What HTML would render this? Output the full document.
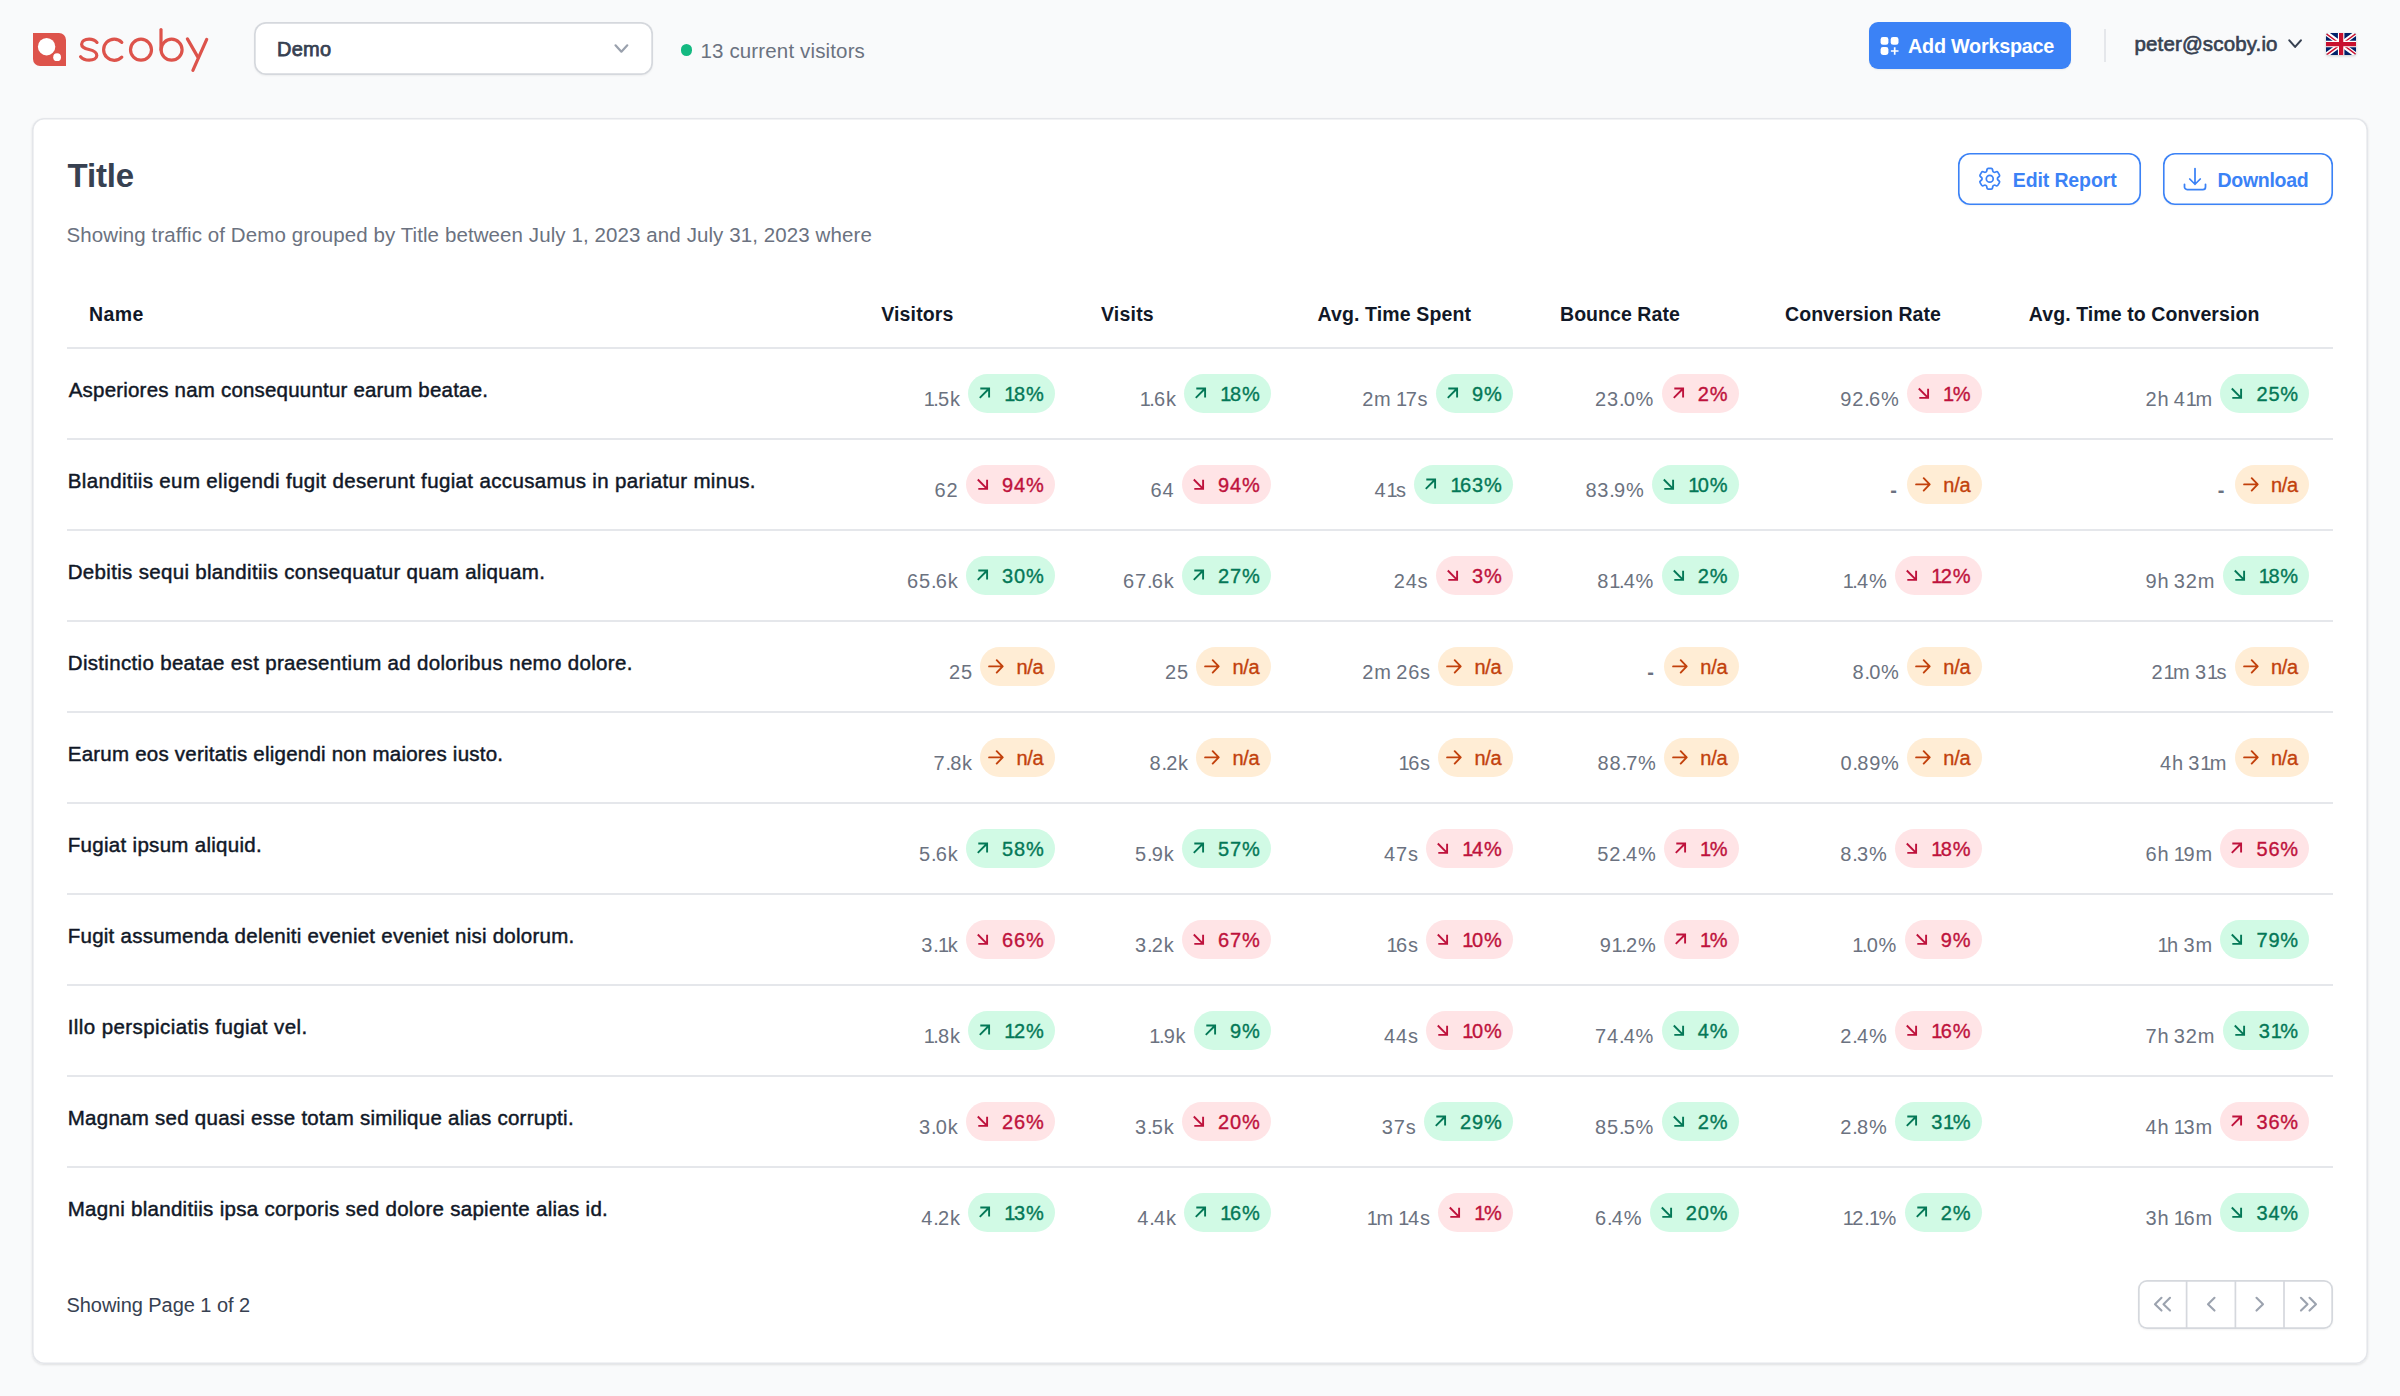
<!DOCTYPE html>
<html><head><meta charset="utf-8"><title>scoby report</title><style>
html,body{margin:0;padding:0}
body{width:2400px;height:1396px;overflow:hidden;background:#f9fafb;position:relative;font-family:"Liberation Sans",sans-serif;}
.abs{position:absolute}
.t{position:absolute;white-space:nowrap}
.cell{display:flex;align-items:flex-start;white-space:nowrap}
.val{font-size:20px;line-height:20px;color:#6b7280;margin-top:15.2px;margin-right:8.4px}
.badge{display:flex;align-items:flex-start;height:39px;border-radius:20px;padding:0 11.3px 0 0;box-sizing:border-box}
.badge svg{flex:none}
.pct{font-size:20px;line-height:20px;margin-top:10.3px;-webkit-text-stroke:0.35px currentColor}
</style></head><body>
<svg class="abs" style="left:0;top:0" width="240" height="90" viewBox="0 0 240 90">
<path d="M33 33H59A7 7 0 0 1 66 40V66H40A7 7 0 0 1 33 59Z" fill="#dd534b"/>
<circle cx="46.6" cy="46.7" r="8.7" fill="#fff"/>
<circle cx="57.1" cy="57.2" r="3.9" fill="#fff"/>
<g fill="none" stroke="#dd534b" stroke-width="3.2" stroke-linecap="round" stroke-linejoin="round">
<path d="M97 42.4C95 40 92.3 39.1 89.2 39.1C84.6 39.1 81.6 41.3 81.6 44.2C81.6 47.3 84.6 48.5 89 49.5C94 50.6 96.8 52.3 96.8 55.6C96.8 58.5 93.6 60.2 89.2 60.2C85.3 60.2 82.4 59 80.6 56.8"/>
<path d="M121.8 42.3A10.6 10.6 0 1 0 121.8 57.1"/>
<circle cx="141" cy="49.7" r="10.5"/>
<path d="M161 29.5V49.7"/>
<circle cx="171.6" cy="49.7" r="10.5"/>
<path d="M187.4 38.9L197.6 56.6"/>
<path d="M206.7 39.4L192.9 70.3"/>
</g></svg>
<div class="abs" style="left:254px;top:22px;width:399px;height:53px;border-radius:12px;background:#fff;box-shadow:inset 0 0 0 1.7px #d5d8dd,0 1px 2px rgba(0,0,0,0.05)"></div>
<div class="t" style="left:277.00px;top:39.37px;font-size:20.00px;line-height:20.00px;color:#374151;font-weight:400;letter-spacing:0.267px;-webkit-text-stroke:0.75px #374151;">Demo</div>
<svg class="abs" style="left:610px;top:40px" width="24" height="18" viewBox="0 0 24 18"><path d="M5.5 5.3L11.4 11.7L17.3 5.3" fill="none" stroke="#9aa1ad" stroke-width="2.2" stroke-linecap="round" stroke-linejoin="round"/></svg>
<div class="abs" style="left:681px;top:44.3px;width:11.4px;height:11.4px;border-radius:50%;background:#14b981"></div>
<div class="t" style="left:700.50px;top:40.95px;font-size:20.50px;line-height:20.50px;color:#6b7280;font-weight:400;letter-spacing:0.144px;">13 current visitors</div>
<div class="abs" style="left:1869px;top:22px;width:202px;height:47px;border-radius:9px;background:#3b82f6;box-shadow:0 1px 2px rgba(0,0,0,0.06)"></div>
<svg class="abs" style="left:1878px;top:35px" width="24" height="24" viewBox="0 0 24 24">
<rect x="2.6" y="2" width="7.8" height="7.8" rx="2.4" fill="#fff"/>
<rect x="12.7" y="2" width="7.8" height="7.8" rx="2.4" fill="#fff"/>
<rect x="2.6" y="12.1" width="7.8" height="7.8" rx="2.4" fill="#fff"/>
<path d="M16.7 12.3V19.8M12.9 16H20.5" stroke="#fff" stroke-width="1.7"/>
</svg>
<div class="t" style="left:1908.00px;top:37.24px;font-size:19.80px;line-height:19.80px;color:#ffffff;font-weight:700;letter-spacing:-0.233px;">Add Workspace</div>
<div class="abs" style="left:2104px;top:29px;width:2px;height:33px;background:#e5e7eb"></div>
<div class="t" style="left:2134.50px;top:34.35px;font-size:20.50px;line-height:20.50px;color:#374151;font-weight:400;letter-spacing:0.138px;-webkit-text-stroke:0.65px #374151;">peter@scoby.io</div>
<svg class="abs" style="left:2284px;top:34px" width="22" height="18" viewBox="0 0 22 18"><path d="M5.3 6.4L11.1 12.9L16.9 6.4" fill="none" stroke="#374151" stroke-width="2.1" stroke-linecap="round" stroke-linejoin="round"/></svg>
<div class="abs" style="left:2325.5px;top:32.6px;width:30.3px;height:22.2px;border-radius:2.5px;overflow:hidden;box-shadow:0 1px 3px rgba(0,0,0,0.18)"><svg width="30.3" height="22.2" viewBox="0 0 30 22" preserveAspectRatio="none" style="display:block">
<rect width="30" height="22" fill="#012169"/>
<path d="M0 0L30 22M30 0L0 22" stroke="#fff" stroke-width="4.6"/>
<path d="M0 0.6L14 10.9M30 0.4L16.4 10.4M0 22L13.6 12M30 21.4L16 11.1" stroke="#C8102E" stroke-width="1.5"/>
<path d="M15 0V22M0 11H30" stroke="#fff" stroke-width="6.4"/>
<path d="M15 0V22M0 11H30" stroke="#C8102E" stroke-width="4.2"/>
</svg></div>
<div class="abs" style="left:32px;top:118px;width:2336px;height:1246px;border-radius:12px;background:#fff;box-shadow:inset 0 0 0 1.6px #e4e6ea,0 1px 3px rgba(0,0,0,0.07),0 1px 2px rgba(0,0,0,0.04)"></div>
<div class="t" style="left:67.50px;top:159.47px;font-size:33.00px;line-height:33.00px;color:#374151;font-weight:700;letter-spacing:-0.150px;">Title</div>
<div class="t" style="left:66.50px;top:225.15px;font-size:20.50px;line-height:20.50px;color:#6b7280;font-weight:400;letter-spacing:0.095px;">Showing traffic of Demo grouped by Title between July 1, 2023 and July 31, 2023 where</div>
<div class="abs" style="left:1958px;top:153px;width:183px;height:52px;border-radius:12px;background:#fff;box-shadow:inset 0 0 0 1.6px #3b82f6,0 1px 2px rgba(0,0,0,0.05)"></div>
<svg class="abs" style="left:1976px;top:164.9px" width="27.5" height="27.5" viewBox="0 0 24 24" fill="none" stroke="#3b82f6" stroke-width="1.5" stroke-linecap="round" stroke-linejoin="round">
<path d="M9.594 3.94c.09-.542.56-.94 1.11-.94h2.593c.55 0 1.02.398 1.11.94l.213 1.281c.063.374.313.686.645.87.074.04.147.083.22.127.325.196.72.257 1.075.124l1.217-.456a1.125 1.125 0 011.37.49l1.296 2.247a1.125 1.125 0 01-.26 1.431l-1.003.827c-.293.241-.438.613-.43.992a7.723 7.723 0 010 .255c-.008.378.137.75.43.991l1.004.827c.424.35.534.955.26 1.43l-1.298 2.247a1.125 1.125 0 01-1.369.491l-1.217-.456c-.355-.133-.75-.072-1.076.124a6.470 6.470 0 01-.22.128c-.331.183-.581.495-.644.869l-.213 1.281c-.09.543-.56.940-1.110.940h-2.594c-.550 0-1.019-.398-1.110-.940l-.213-1.281c-.062-.374-.312-.686-.644-.870a6.520 6.520 0 01-.220-.127c-.325-.196-.720-.257-1.076-.124l-1.217.456a1.125 1.125 0 01-1.369-.490l-1.297-2.247a1.125 1.125 0 01.260-1.431l1.004-.827c.292-.240.437-.613.430-.991a6.932 6.932 0 010-.255c.007-.380-.138-.751-.430-.992l-1.004-.827a1.125 1.125 0 01-.260-1.430l1.297-2.247a1.125 1.125 0 011.370-.491l1.216.456c.356.133.751.072 1.076-.124.072-.044.146-.086.220-.128.332-.183.582-.495.644-.869l.214-1.280z"/>
<path d="M15 12a3 3 0 11-6 0 3 3 0 016 0z"/>
</svg>
<div class="t" style="left:2012.75px;top:171.19px;font-size:19.50px;line-height:19.50px;color:#3b82f6;font-weight:700;letter-spacing:-0.120px;">Edit Report</div>
<div class="abs" style="left:2163px;top:153px;width:170px;height:52px;border-radius:12px;background:#fff;box-shadow:inset 0 0 0 1.6px #3b82f6,0 1px 2px rgba(0,0,0,0.05)"></div>
<svg class="abs" style="left:2181.1px;top:165.1px" width="28" height="28" viewBox="0 0 24 24" fill="none" stroke="#3b82f6" stroke-width="1.5" stroke-linecap="round" stroke-linejoin="round">
<path d="M3 16.5v2.25A2.25 2.25 0 005.25 21h13.5A2.25 2.25 0 0021 18.75V16.5M16.5 12L12 16.5m0 0L7.5 12m4.5 4.5V3"/>
</svg>
<div class="t" style="left:2217.50px;top:171.19px;font-size:19.50px;line-height:19.50px;color:#3b82f6;font-weight:700;letter-spacing:-0.286px;">Download</div>
<div class="t" style="left:89.00px;top:304.89px;font-size:19.50px;line-height:19.50px;color:#111827;font-weight:700;letter-spacing:0.400px;">Name</div>
<div class="t" style="left:881.25px;top:304.89px;font-size:19.50px;line-height:19.50px;color:#111827;font-weight:700;letter-spacing:0.143px;">Visitors</div>
<div class="t" style="left:1101.00px;top:304.89px;font-size:19.50px;line-height:19.50px;color:#111827;font-weight:700;letter-spacing:0.200px;">Visits</div>
<div class="t" style="left:1317.50px;top:304.89px;font-size:19.50px;line-height:19.50px;color:#111827;font-weight:700;letter-spacing:0.129px;">Avg. Time Spent</div>
<div class="t" style="left:1560.00px;top:304.89px;font-size:19.50px;line-height:19.50px;color:#111827;font-weight:700;letter-spacing:0.060px;">Bounce Rate</div>
<div class="t" style="left:1785.00px;top:304.89px;font-size:19.50px;line-height:19.50px;color:#111827;font-weight:700;letter-spacing:0.071px;">Conversion Rate</div>
<div class="t" style="left:2028.75px;top:304.89px;font-size:19.50px;line-height:19.50px;color:#111827;font-weight:700;letter-spacing:0.091px;">Avg. Time to Conversion</div>
<div class="abs" style="left:67px;top:347.3px;width:2266px;height:2px;background:#e5e7eb"></div>
<div class="abs" style="left:67px;top:438.3px;width:2266px;height:2px;background:#e5e7eb"></div>
<div class="abs" style="left:67px;top:529.3px;width:2266px;height:2px;background:#e5e7eb"></div>
<div class="abs" style="left:67px;top:620.3px;width:2266px;height:2px;background:#e5e7eb"></div>
<div class="abs" style="left:67px;top:711.3px;width:2266px;height:2px;background:#e5e7eb"></div>
<div class="abs" style="left:67px;top:802.3px;width:2266px;height:2px;background:#e5e7eb"></div>
<div class="abs" style="left:67px;top:893.3px;width:2266px;height:2px;background:#e5e7eb"></div>
<div class="abs" style="left:67px;top:984.3px;width:2266px;height:2px;background:#e5e7eb"></div>
<div class="abs" style="left:67px;top:1075.3px;width:2266px;height:2px;background:#e5e7eb"></div>
<div class="abs" style="left:67px;top:1166.3px;width:2266px;height:2px;background:#e5e7eb"></div>
<div class="t" style="left:68.75px;top:379.75px;font-size:20.50px;line-height:20.50px;color:#111827;font-weight:400;letter-spacing:0.195px;-webkit-text-stroke:0.45px #111827;">Asperiores nam consequuntur earum beatae.</div>
<div class="abs cell" style="right:1345.0px;top:373.6px;"><span class="val"><span style="letter-spacing:-1.5px">1</span><span style="letter-spacing:-0.8px">.</span><span style="letter-spacing:0.8px">5</span>k</span><span class="badge" style="background:#d1fae5;color:#047857"><svg width="36" height="39" viewBox="0 0 36 39" fill="none" stroke="#047857" stroke-width="1.9"><path d="M11.8 23.9L21.1 14.5M12.3 14.5H21.1V23.6" stroke-linejoin="miter"/></svg><span class="pct"><span style="letter-spacing:-1.5px">1</span><span style="letter-spacing:0.8px">8</span>%</span></span></div>
<div class="abs cell" style="right:1129.0px;top:373.6px;"><span class="val"><span style="letter-spacing:-1.5px">1</span><span style="letter-spacing:-0.8px">.</span><span style="letter-spacing:0.8px">6</span>k</span><span class="badge" style="background:#d1fae5;color:#047857"><svg width="36" height="39" viewBox="0 0 36 39" fill="none" stroke="#047857" stroke-width="1.9"><path d="M11.8 23.9L21.1 14.5M12.3 14.5H21.1V23.6" stroke-linejoin="miter"/></svg><span class="pct"><span style="letter-spacing:-1.5px">1</span><span style="letter-spacing:0.8px">8</span>%</span></span></div>
<div class="abs cell" style="right:887.0px;top:373.6px;"><span class="val"><span style="letter-spacing:0.8px">2</span>m<span style="letter-spacing:-0.3px"> </span><span style="letter-spacing:-1.5px">1</span><span style="letter-spacing:0.8px">7</span>s</span><span class="badge" style="background:#d1fae5;color:#047857"><svg width="36" height="39" viewBox="0 0 36 39" fill="none" stroke="#047857" stroke-width="1.9"><path d="M11.8 23.9L21.1 14.5M12.3 14.5H21.1V23.6" stroke-linejoin="miter"/></svg><span class="pct"><span style="letter-spacing:0.8px">9</span>%</span></span></div>
<div class="abs cell" style="right:661.2px;top:373.6px;"><span class="val"><span style="letter-spacing:0.8px">2</span><span style="letter-spacing:0.8px">3</span><span style="letter-spacing:-0.8px">.</span><span style="letter-spacing:0.8px">0</span>%</span><span class="badge" style="background:#ffe4e6;color:#be123c"><svg width="36" height="39" viewBox="0 0 36 39" fill="none" stroke="#be123c" stroke-width="1.9"><path d="M11.8 23.9L21.1 14.5M12.3 14.5H21.1V23.6" stroke-linejoin="miter"/></svg><span class="pct"><span style="letter-spacing:0.8px">2</span>%</span></span></div>
<div class="abs cell" style="right:418.2px;top:373.6px;"><span class="val"><span style="letter-spacing:0.8px">9</span><span style="letter-spacing:0.8px">2</span><span style="letter-spacing:-0.8px">.</span><span style="letter-spacing:0.8px">6</span>%</span><span class="badge" style="background:#ffe4e6;color:#be123c"><svg width="36" height="39" viewBox="0 0 36 39" fill="none" stroke="#be123c" stroke-width="1.9"><path d="M11.8 14.5L21.1 23.9M21.1 14.8V23.9H12.3" stroke-linejoin="miter"/></svg><span class="pct"><span style="letter-spacing:-1.5px">1</span>%</span></span></div>
<div class="abs cell" style="right:90.6px;top:373.6px;"><span class="val"><span style="letter-spacing:0.8px">2</span>h<span style="letter-spacing:-0.3px"> </span><span style="letter-spacing:0.8px">4</span><span style="letter-spacing:-1.5px">1</span>m</span><span class="badge" style="background:#d1fae5;color:#047857"><svg width="36" height="39" viewBox="0 0 36 39" fill="none" stroke="#047857" stroke-width="1.9"><path d="M11.8 14.5L21.1 23.9M21.1 14.8V23.9H12.3" stroke-linejoin="miter"/></svg><span class="pct"><span style="letter-spacing:0.8px">2</span><span style="letter-spacing:0.8px">5</span>%</span></span></div>
<div class="t" style="left:67.75px;top:470.75px;font-size:20.50px;line-height:20.50px;color:#111827;font-weight:400;letter-spacing:0.353px;-webkit-text-stroke:0.45px #111827;">Blanditiis eum eligendi fugit deserunt fugiat accusamus in pariatur minus.</div>
<div class="abs cell" style="right:1345.0px;top:464.6px;"><span class="val"><span style="letter-spacing:0.8px">6</span>2</span><span class="badge" style="background:#ffe4e6;color:#be123c"><svg width="36" height="39" viewBox="0 0 36 39" fill="none" stroke="#be123c" stroke-width="1.9"><path d="M11.8 14.5L21.1 23.9M21.1 14.8V23.9H12.3" stroke-linejoin="miter"/></svg><span class="pct"><span style="letter-spacing:0.8px">9</span><span style="letter-spacing:0.8px">4</span>%</span></span></div>
<div class="abs cell" style="right:1129.0px;top:464.6px;"><span class="val"><span style="letter-spacing:0.8px">6</span>4</span><span class="badge" style="background:#ffe4e6;color:#be123c"><svg width="36" height="39" viewBox="0 0 36 39" fill="none" stroke="#be123c" stroke-width="1.9"><path d="M11.8 14.5L21.1 23.9M21.1 14.8V23.9H12.3" stroke-linejoin="miter"/></svg><span class="pct"><span style="letter-spacing:0.8px">9</span><span style="letter-spacing:0.8px">4</span>%</span></span></div>
<div class="abs cell" style="right:887.0px;top:464.6px;"><span class="val"><span style="letter-spacing:0.8px">4</span><span style="letter-spacing:-1.5px">1</span>s</span><span class="badge" style="background:#d1fae5;color:#047857"><svg width="36" height="39" viewBox="0 0 36 39" fill="none" stroke="#047857" stroke-width="1.9"><path d="M11.8 23.9L21.1 14.5M12.3 14.5H21.1V23.6" stroke-linejoin="miter"/></svg><span class="pct"><span style="letter-spacing:-1.5px">1</span><span style="letter-spacing:0.8px">6</span><span style="letter-spacing:0.8px">3</span>%</span></span></div>
<div class="abs cell" style="right:661.2px;top:464.6px;"><span class="val"><span style="letter-spacing:0.8px">8</span><span style="letter-spacing:0.8px">3</span><span style="letter-spacing:-0.8px">.</span><span style="letter-spacing:0.8px">9</span>%</span><span class="badge" style="background:#d1fae5;color:#047857"><svg width="36" height="39" viewBox="0 0 36 39" fill="none" stroke="#047857" stroke-width="1.9"><path d="M11.8 14.5L21.1 23.9M21.1 14.8V23.9H12.3" stroke-linejoin="miter"/></svg><span class="pct"><span style="letter-spacing:-1.5px">1</span><span style="letter-spacing:0.8px">0</span>%</span></span></div>
<div class="abs cell" style="right:418.2px;top:464.6px;"><span class="val" style="font-weight:700;margin-right:10.4px">-</span><span class="badge" style="background:#ffedd5;color:#c2410c"><svg width="36" height="39" viewBox="0 0 36 39" fill="none" stroke="#c2410c" stroke-width="1.9"><path d="M9.1 19.4H22.5M16.7 13.2L22.7 19.4L16.7 25.6" stroke-linecap="round" stroke-linejoin="round"/></svg><span class="pct"><span style="letter-spacing:-0.3px">n</span><span style="letter-spacing:-0.3px">/</span>a</span></span></div>
<div class="abs cell" style="right:90.6px;top:464.6px;"><span class="val" style="font-weight:700;margin-right:10.4px">-</span><span class="badge" style="background:#ffedd5;color:#c2410c"><svg width="36" height="39" viewBox="0 0 36 39" fill="none" stroke="#c2410c" stroke-width="1.9"><path d="M9.1 19.4H22.5M16.7 13.2L22.7 19.4L16.7 25.6" stroke-linecap="round" stroke-linejoin="round"/></svg><span class="pct"><span style="letter-spacing:-0.3px">n</span><span style="letter-spacing:-0.3px">/</span>a</span></span></div>
<div class="t" style="left:67.75px;top:561.75px;font-size:20.50px;line-height:20.50px;color:#111827;font-weight:400;letter-spacing:0.318px;-webkit-text-stroke:0.45px #111827;">Debitis sequi blanditiis consequatur quam aliquam.</div>
<div class="abs cell" style="right:1345.0px;top:555.6px;"><span class="val"><span style="letter-spacing:0.8px">6</span><span style="letter-spacing:0.8px">5</span><span style="letter-spacing:-0.8px">.</span><span style="letter-spacing:0.8px">6</span>k</span><span class="badge" style="background:#d1fae5;color:#047857"><svg width="36" height="39" viewBox="0 0 36 39" fill="none" stroke="#047857" stroke-width="1.9"><path d="M11.8 23.9L21.1 14.5M12.3 14.5H21.1V23.6" stroke-linejoin="miter"/></svg><span class="pct"><span style="letter-spacing:0.8px">3</span><span style="letter-spacing:0.8px">0</span>%</span></span></div>
<div class="abs cell" style="right:1129.0px;top:555.6px;"><span class="val"><span style="letter-spacing:0.8px">6</span><span style="letter-spacing:0.8px">7</span><span style="letter-spacing:-0.8px">.</span><span style="letter-spacing:0.8px">6</span>k</span><span class="badge" style="background:#d1fae5;color:#047857"><svg width="36" height="39" viewBox="0 0 36 39" fill="none" stroke="#047857" stroke-width="1.9"><path d="M11.8 23.9L21.1 14.5M12.3 14.5H21.1V23.6" stroke-linejoin="miter"/></svg><span class="pct"><span style="letter-spacing:0.8px">2</span><span style="letter-spacing:0.8px">7</span>%</span></span></div>
<div class="abs cell" style="right:887.0px;top:555.6px;"><span class="val"><span style="letter-spacing:0.8px">2</span><span style="letter-spacing:0.8px">4</span>s</span><span class="badge" style="background:#ffe4e6;color:#be123c"><svg width="36" height="39" viewBox="0 0 36 39" fill="none" stroke="#be123c" stroke-width="1.9"><path d="M11.8 14.5L21.1 23.9M21.1 14.8V23.9H12.3" stroke-linejoin="miter"/></svg><span class="pct"><span style="letter-spacing:0.8px">3</span>%</span></span></div>
<div class="abs cell" style="right:661.2px;top:555.6px;"><span class="val"><span style="letter-spacing:0.8px">8</span><span style="letter-spacing:-1.5px">1</span><span style="letter-spacing:-0.8px">.</span><span style="letter-spacing:0.8px">4</span>%</span><span class="badge" style="background:#d1fae5;color:#047857"><svg width="36" height="39" viewBox="0 0 36 39" fill="none" stroke="#047857" stroke-width="1.9"><path d="M11.8 14.5L21.1 23.9M21.1 14.8V23.9H12.3" stroke-linejoin="miter"/></svg><span class="pct"><span style="letter-spacing:0.8px">2</span>%</span></span></div>
<div class="abs cell" style="right:418.2px;top:555.6px;"><span class="val"><span style="letter-spacing:-1.5px">1</span><span style="letter-spacing:-0.8px">.</span><span style="letter-spacing:0.8px">4</span>%</span><span class="badge" style="background:#ffe4e6;color:#be123c"><svg width="36" height="39" viewBox="0 0 36 39" fill="none" stroke="#be123c" stroke-width="1.9"><path d="M11.8 14.5L21.1 23.9M21.1 14.8V23.9H12.3" stroke-linejoin="miter"/></svg><span class="pct"><span style="letter-spacing:-1.5px">1</span><span style="letter-spacing:0.8px">2</span>%</span></span></div>
<div class="abs cell" style="right:90.6px;top:555.6px;"><span class="val"><span style="letter-spacing:0.8px">9</span>h<span style="letter-spacing:-0.3px"> </span><span style="letter-spacing:0.8px">3</span><span style="letter-spacing:0.8px">2</span>m</span><span class="badge" style="background:#d1fae5;color:#047857"><svg width="36" height="39" viewBox="0 0 36 39" fill="none" stroke="#047857" stroke-width="1.9"><path d="M11.8 14.5L21.1 23.9M21.1 14.8V23.9H12.3" stroke-linejoin="miter"/></svg><span class="pct"><span style="letter-spacing:-1.5px">1</span><span style="letter-spacing:0.8px">8</span>%</span></span></div>
<div class="t" style="left:67.75px;top:652.75px;font-size:20.50px;line-height:20.50px;color:#111827;font-weight:400;letter-spacing:0.324px;-webkit-text-stroke:0.45px #111827;">Distinctio beatae est praesentium ad doloribus nemo dolore.</div>
<div class="abs cell" style="right:1345.0px;top:646.6px;"><span class="val"><span style="letter-spacing:0.8px">2</span>5</span><span class="badge" style="background:#ffedd5;color:#c2410c"><svg width="36" height="39" viewBox="0 0 36 39" fill="none" stroke="#c2410c" stroke-width="1.9"><path d="M9.1 19.4H22.5M16.7 13.2L22.7 19.4L16.7 25.6" stroke-linecap="round" stroke-linejoin="round"/></svg><span class="pct"><span style="letter-spacing:-0.3px">n</span><span style="letter-spacing:-0.3px">/</span>a</span></span></div>
<div class="abs cell" style="right:1129.0px;top:646.6px;"><span class="val"><span style="letter-spacing:0.8px">2</span>5</span><span class="badge" style="background:#ffedd5;color:#c2410c"><svg width="36" height="39" viewBox="0 0 36 39" fill="none" stroke="#c2410c" stroke-width="1.9"><path d="M9.1 19.4H22.5M16.7 13.2L22.7 19.4L16.7 25.6" stroke-linecap="round" stroke-linejoin="round"/></svg><span class="pct"><span style="letter-spacing:-0.3px">n</span><span style="letter-spacing:-0.3px">/</span>a</span></span></div>
<div class="abs cell" style="right:887.0px;top:646.6px;"><span class="val"><span style="letter-spacing:0.8px">2</span>m<span style="letter-spacing:-0.3px"> </span><span style="letter-spacing:0.8px">2</span><span style="letter-spacing:0.8px">6</span>s</span><span class="badge" style="background:#ffedd5;color:#c2410c"><svg width="36" height="39" viewBox="0 0 36 39" fill="none" stroke="#c2410c" stroke-width="1.9"><path d="M9.1 19.4H22.5M16.7 13.2L22.7 19.4L16.7 25.6" stroke-linecap="round" stroke-linejoin="round"/></svg><span class="pct"><span style="letter-spacing:-0.3px">n</span><span style="letter-spacing:-0.3px">/</span>a</span></span></div>
<div class="abs cell" style="right:661.2px;top:646.6px;"><span class="val" style="font-weight:700;margin-right:10.4px">-</span><span class="badge" style="background:#ffedd5;color:#c2410c"><svg width="36" height="39" viewBox="0 0 36 39" fill="none" stroke="#c2410c" stroke-width="1.9"><path d="M9.1 19.4H22.5M16.7 13.2L22.7 19.4L16.7 25.6" stroke-linecap="round" stroke-linejoin="round"/></svg><span class="pct"><span style="letter-spacing:-0.3px">n</span><span style="letter-spacing:-0.3px">/</span>a</span></span></div>
<div class="abs cell" style="right:418.2px;top:646.6px;"><span class="val"><span style="letter-spacing:0.8px">8</span><span style="letter-spacing:-0.8px">.</span><span style="letter-spacing:0.8px">0</span>%</span><span class="badge" style="background:#ffedd5;color:#c2410c"><svg width="36" height="39" viewBox="0 0 36 39" fill="none" stroke="#c2410c" stroke-width="1.9"><path d="M9.1 19.4H22.5M16.7 13.2L22.7 19.4L16.7 25.6" stroke-linecap="round" stroke-linejoin="round"/></svg><span class="pct"><span style="letter-spacing:-0.3px">n</span><span style="letter-spacing:-0.3px">/</span>a</span></span></div>
<div class="abs cell" style="right:90.6px;top:646.6px;"><span class="val"><span style="letter-spacing:0.8px">2</span><span style="letter-spacing:-1.5px">1</span>m<span style="letter-spacing:-0.3px"> </span><span style="letter-spacing:0.8px">3</span><span style="letter-spacing:-1.5px">1</span>s</span><span class="badge" style="background:#ffedd5;color:#c2410c"><svg width="36" height="39" viewBox="0 0 36 39" fill="none" stroke="#c2410c" stroke-width="1.9"><path d="M9.1 19.4H22.5M16.7 13.2L22.7 19.4L16.7 25.6" stroke-linecap="round" stroke-linejoin="round"/></svg><span class="pct"><span style="letter-spacing:-0.3px">n</span><span style="letter-spacing:-0.3px">/</span>a</span></span></div>
<div class="t" style="left:67.75px;top:743.75px;font-size:20.50px;line-height:20.50px;color:#111827;font-weight:400;letter-spacing:0.222px;-webkit-text-stroke:0.45px #111827;">Earum eos veritatis eligendi non maiores iusto.</div>
<div class="abs cell" style="right:1345.0px;top:737.6px;"><span class="val"><span style="letter-spacing:0.8px">7</span><span style="letter-spacing:-0.8px">.</span><span style="letter-spacing:0.8px">8</span>k</span><span class="badge" style="background:#ffedd5;color:#c2410c"><svg width="36" height="39" viewBox="0 0 36 39" fill="none" stroke="#c2410c" stroke-width="1.9"><path d="M9.1 19.4H22.5M16.7 13.2L22.7 19.4L16.7 25.6" stroke-linecap="round" stroke-linejoin="round"/></svg><span class="pct"><span style="letter-spacing:-0.3px">n</span><span style="letter-spacing:-0.3px">/</span>a</span></span></div>
<div class="abs cell" style="right:1129.0px;top:737.6px;"><span class="val"><span style="letter-spacing:0.8px">8</span><span style="letter-spacing:-0.8px">.</span><span style="letter-spacing:0.8px">2</span>k</span><span class="badge" style="background:#ffedd5;color:#c2410c"><svg width="36" height="39" viewBox="0 0 36 39" fill="none" stroke="#c2410c" stroke-width="1.9"><path d="M9.1 19.4H22.5M16.7 13.2L22.7 19.4L16.7 25.6" stroke-linecap="round" stroke-linejoin="round"/></svg><span class="pct"><span style="letter-spacing:-0.3px">n</span><span style="letter-spacing:-0.3px">/</span>a</span></span></div>
<div class="abs cell" style="right:887.0px;top:737.6px;"><span class="val"><span style="letter-spacing:-1.5px">1</span><span style="letter-spacing:0.8px">6</span>s</span><span class="badge" style="background:#ffedd5;color:#c2410c"><svg width="36" height="39" viewBox="0 0 36 39" fill="none" stroke="#c2410c" stroke-width="1.9"><path d="M9.1 19.4H22.5M16.7 13.2L22.7 19.4L16.7 25.6" stroke-linecap="round" stroke-linejoin="round"/></svg><span class="pct"><span style="letter-spacing:-0.3px">n</span><span style="letter-spacing:-0.3px">/</span>a</span></span></div>
<div class="abs cell" style="right:661.2px;top:737.6px;"><span class="val"><span style="letter-spacing:0.8px">8</span><span style="letter-spacing:0.8px">8</span><span style="letter-spacing:-0.8px">.</span><span style="letter-spacing:0.8px">7</span>%</span><span class="badge" style="background:#ffedd5;color:#c2410c"><svg width="36" height="39" viewBox="0 0 36 39" fill="none" stroke="#c2410c" stroke-width="1.9"><path d="M9.1 19.4H22.5M16.7 13.2L22.7 19.4L16.7 25.6" stroke-linecap="round" stroke-linejoin="round"/></svg><span class="pct"><span style="letter-spacing:-0.3px">n</span><span style="letter-spacing:-0.3px">/</span>a</span></span></div>
<div class="abs cell" style="right:418.2px;top:737.6px;"><span class="val"><span style="letter-spacing:0.8px">0</span><span style="letter-spacing:-0.8px">.</span><span style="letter-spacing:0.8px">8</span><span style="letter-spacing:0.8px">9</span>%</span><span class="badge" style="background:#ffedd5;color:#c2410c"><svg width="36" height="39" viewBox="0 0 36 39" fill="none" stroke="#c2410c" stroke-width="1.9"><path d="M9.1 19.4H22.5M16.7 13.2L22.7 19.4L16.7 25.6" stroke-linecap="round" stroke-linejoin="round"/></svg><span class="pct"><span style="letter-spacing:-0.3px">n</span><span style="letter-spacing:-0.3px">/</span>a</span></span></div>
<div class="abs cell" style="right:90.6px;top:737.6px;"><span class="val"><span style="letter-spacing:0.8px">4</span>h<span style="letter-spacing:-0.3px"> </span><span style="letter-spacing:0.8px">3</span><span style="letter-spacing:-1.5px">1</span>m</span><span class="badge" style="background:#ffedd5;color:#c2410c"><svg width="36" height="39" viewBox="0 0 36 39" fill="none" stroke="#c2410c" stroke-width="1.9"><path d="M9.1 19.4H22.5M16.7 13.2L22.7 19.4L16.7 25.6" stroke-linecap="round" stroke-linejoin="round"/></svg><span class="pct"><span style="letter-spacing:-0.3px">n</span><span style="letter-spacing:-0.3px">/</span>a</span></span></div>
<div class="t" style="left:67.75px;top:834.75px;font-size:20.50px;line-height:20.50px;color:#111827;font-weight:400;letter-spacing:0.300px;-webkit-text-stroke:0.45px #111827;">Fugiat ipsum aliquid.</div>
<div class="abs cell" style="right:1345.0px;top:828.6px;"><span class="val"><span style="letter-spacing:0.8px">5</span><span style="letter-spacing:-0.8px">.</span><span style="letter-spacing:0.8px">6</span>k</span><span class="badge" style="background:#d1fae5;color:#047857"><svg width="36" height="39" viewBox="0 0 36 39" fill="none" stroke="#047857" stroke-width="1.9"><path d="M11.8 23.9L21.1 14.5M12.3 14.5H21.1V23.6" stroke-linejoin="miter"/></svg><span class="pct"><span style="letter-spacing:0.8px">5</span><span style="letter-spacing:0.8px">8</span>%</span></span></div>
<div class="abs cell" style="right:1129.0px;top:828.6px;"><span class="val"><span style="letter-spacing:0.8px">5</span><span style="letter-spacing:-0.8px">.</span><span style="letter-spacing:0.8px">9</span>k</span><span class="badge" style="background:#d1fae5;color:#047857"><svg width="36" height="39" viewBox="0 0 36 39" fill="none" stroke="#047857" stroke-width="1.9"><path d="M11.8 23.9L21.1 14.5M12.3 14.5H21.1V23.6" stroke-linejoin="miter"/></svg><span class="pct"><span style="letter-spacing:0.8px">5</span><span style="letter-spacing:0.8px">7</span>%</span></span></div>
<div class="abs cell" style="right:887.0px;top:828.6px;"><span class="val"><span style="letter-spacing:0.8px">4</span><span style="letter-spacing:0.8px">7</span>s</span><span class="badge" style="background:#ffe4e6;color:#be123c"><svg width="36" height="39" viewBox="0 0 36 39" fill="none" stroke="#be123c" stroke-width="1.9"><path d="M11.8 14.5L21.1 23.9M21.1 14.8V23.9H12.3" stroke-linejoin="miter"/></svg><span class="pct"><span style="letter-spacing:-1.5px">1</span><span style="letter-spacing:0.8px">4</span>%</span></span></div>
<div class="abs cell" style="right:661.2px;top:828.6px;"><span class="val"><span style="letter-spacing:0.8px">5</span><span style="letter-spacing:0.8px">2</span><span style="letter-spacing:-0.8px">.</span><span style="letter-spacing:0.8px">4</span>%</span><span class="badge" style="background:#ffe4e6;color:#be123c"><svg width="36" height="39" viewBox="0 0 36 39" fill="none" stroke="#be123c" stroke-width="1.9"><path d="M11.8 23.9L21.1 14.5M12.3 14.5H21.1V23.6" stroke-linejoin="miter"/></svg><span class="pct"><span style="letter-spacing:-1.5px">1</span>%</span></span></div>
<div class="abs cell" style="right:418.2px;top:828.6px;"><span class="val"><span style="letter-spacing:0.8px">8</span><span style="letter-spacing:-0.8px">.</span><span style="letter-spacing:0.8px">3</span>%</span><span class="badge" style="background:#ffe4e6;color:#be123c"><svg width="36" height="39" viewBox="0 0 36 39" fill="none" stroke="#be123c" stroke-width="1.9"><path d="M11.8 14.5L21.1 23.9M21.1 14.8V23.9H12.3" stroke-linejoin="miter"/></svg><span class="pct"><span style="letter-spacing:-1.5px">1</span><span style="letter-spacing:0.8px">8</span>%</span></span></div>
<div class="abs cell" style="right:90.6px;top:828.6px;"><span class="val"><span style="letter-spacing:0.8px">6</span>h<span style="letter-spacing:-0.3px"> </span><span style="letter-spacing:-1.5px">1</span><span style="letter-spacing:0.8px">9</span>m</span><span class="badge" style="background:#ffe4e6;color:#be123c"><svg width="36" height="39" viewBox="0 0 36 39" fill="none" stroke="#be123c" stroke-width="1.9"><path d="M11.8 23.9L21.1 14.5M12.3 14.5H21.1V23.6" stroke-linejoin="miter"/></svg><span class="pct"><span style="letter-spacing:0.8px">5</span><span style="letter-spacing:0.8px">6</span>%</span></span></div>
<div class="t" style="left:67.75px;top:925.75px;font-size:20.50px;line-height:20.50px;color:#111827;font-weight:400;letter-spacing:0.245px;-webkit-text-stroke:0.45px #111827;">Fugit assumenda deleniti eveniet eveniet nisi dolorum.</div>
<div class="abs cell" style="right:1345.0px;top:919.6px;"><span class="val"><span style="letter-spacing:0.8px">3</span><span style="letter-spacing:-0.8px">.</span><span style="letter-spacing:-1.5px">1</span>k</span><span class="badge" style="background:#ffe4e6;color:#be123c"><svg width="36" height="39" viewBox="0 0 36 39" fill="none" stroke="#be123c" stroke-width="1.9"><path d="M11.8 14.5L21.1 23.9M21.1 14.8V23.9H12.3" stroke-linejoin="miter"/></svg><span class="pct"><span style="letter-spacing:0.8px">6</span><span style="letter-spacing:0.8px">6</span>%</span></span></div>
<div class="abs cell" style="right:1129.0px;top:919.6px;"><span class="val"><span style="letter-spacing:0.8px">3</span><span style="letter-spacing:-0.8px">.</span><span style="letter-spacing:0.8px">2</span>k</span><span class="badge" style="background:#ffe4e6;color:#be123c"><svg width="36" height="39" viewBox="0 0 36 39" fill="none" stroke="#be123c" stroke-width="1.9"><path d="M11.8 14.5L21.1 23.9M21.1 14.8V23.9H12.3" stroke-linejoin="miter"/></svg><span class="pct"><span style="letter-spacing:0.8px">6</span><span style="letter-spacing:0.8px">7</span>%</span></span></div>
<div class="abs cell" style="right:887.0px;top:919.6px;"><span class="val"><span style="letter-spacing:-1.5px">1</span><span style="letter-spacing:0.8px">6</span>s</span><span class="badge" style="background:#ffe4e6;color:#be123c"><svg width="36" height="39" viewBox="0 0 36 39" fill="none" stroke="#be123c" stroke-width="1.9"><path d="M11.8 14.5L21.1 23.9M21.1 14.8V23.9H12.3" stroke-linejoin="miter"/></svg><span class="pct"><span style="letter-spacing:-1.5px">1</span><span style="letter-spacing:0.8px">0</span>%</span></span></div>
<div class="abs cell" style="right:661.2px;top:919.6px;"><span class="val"><span style="letter-spacing:0.8px">9</span><span style="letter-spacing:-1.5px">1</span><span style="letter-spacing:-0.8px">.</span><span style="letter-spacing:0.8px">2</span>%</span><span class="badge" style="background:#ffe4e6;color:#be123c"><svg width="36" height="39" viewBox="0 0 36 39" fill="none" stroke="#be123c" stroke-width="1.9"><path d="M11.8 23.9L21.1 14.5M12.3 14.5H21.1V23.6" stroke-linejoin="miter"/></svg><span class="pct"><span style="letter-spacing:-1.5px">1</span>%</span></span></div>
<div class="abs cell" style="right:418.2px;top:919.6px;"><span class="val"><span style="letter-spacing:-1.5px">1</span><span style="letter-spacing:-0.8px">.</span><span style="letter-spacing:0.8px">0</span>%</span><span class="badge" style="background:#ffe4e6;color:#be123c"><svg width="36" height="39" viewBox="0 0 36 39" fill="none" stroke="#be123c" stroke-width="1.9"><path d="M11.8 14.5L21.1 23.9M21.1 14.8V23.9H12.3" stroke-linejoin="miter"/></svg><span class="pct"><span style="letter-spacing:0.8px">9</span>%</span></span></div>
<div class="abs cell" style="right:90.6px;top:919.6px;"><span class="val"><span style="letter-spacing:-1.5px">1</span>h<span style="letter-spacing:-0.3px"> </span><span style="letter-spacing:0.8px">3</span>m</span><span class="badge" style="background:#d1fae5;color:#047857"><svg width="36" height="39" viewBox="0 0 36 39" fill="none" stroke="#047857" stroke-width="1.9"><path d="M11.8 14.5L21.1 23.9M21.1 14.8V23.9H12.3" stroke-linejoin="miter"/></svg><span class="pct"><span style="letter-spacing:0.8px">7</span><span style="letter-spacing:0.8px">9</span>%</span></span></div>
<div class="t" style="left:67.75px;top:1016.75px;font-size:20.50px;line-height:20.50px;color:#111827;font-weight:400;letter-spacing:0.414px;-webkit-text-stroke:0.45px #111827;">Illo perspiciatis fugiat vel.</div>
<div class="abs cell" style="right:1345.0px;top:1010.6px;"><span class="val"><span style="letter-spacing:-1.5px">1</span><span style="letter-spacing:-0.8px">.</span><span style="letter-spacing:0.8px">8</span>k</span><span class="badge" style="background:#d1fae5;color:#047857"><svg width="36" height="39" viewBox="0 0 36 39" fill="none" stroke="#047857" stroke-width="1.9"><path d="M11.8 23.9L21.1 14.5M12.3 14.5H21.1V23.6" stroke-linejoin="miter"/></svg><span class="pct"><span style="letter-spacing:-1.5px">1</span><span style="letter-spacing:0.8px">2</span>%</span></span></div>
<div class="abs cell" style="right:1129.0px;top:1010.6px;"><span class="val"><span style="letter-spacing:-1.5px">1</span><span style="letter-spacing:-0.8px">.</span><span style="letter-spacing:0.8px">9</span>k</span><span class="badge" style="background:#d1fae5;color:#047857"><svg width="36" height="39" viewBox="0 0 36 39" fill="none" stroke="#047857" stroke-width="1.9"><path d="M11.8 23.9L21.1 14.5M12.3 14.5H21.1V23.6" stroke-linejoin="miter"/></svg><span class="pct"><span style="letter-spacing:0.8px">9</span>%</span></span></div>
<div class="abs cell" style="right:887.0px;top:1010.6px;"><span class="val"><span style="letter-spacing:0.8px">4</span><span style="letter-spacing:0.8px">4</span>s</span><span class="badge" style="background:#ffe4e6;color:#be123c"><svg width="36" height="39" viewBox="0 0 36 39" fill="none" stroke="#be123c" stroke-width="1.9"><path d="M11.8 14.5L21.1 23.9M21.1 14.8V23.9H12.3" stroke-linejoin="miter"/></svg><span class="pct"><span style="letter-spacing:-1.5px">1</span><span style="letter-spacing:0.8px">0</span>%</span></span></div>
<div class="abs cell" style="right:661.2px;top:1010.6px;"><span class="val"><span style="letter-spacing:0.8px">7</span><span style="letter-spacing:0.8px">4</span><span style="letter-spacing:-0.8px">.</span><span style="letter-spacing:0.8px">4</span>%</span><span class="badge" style="background:#d1fae5;color:#047857"><svg width="36" height="39" viewBox="0 0 36 39" fill="none" stroke="#047857" stroke-width="1.9"><path d="M11.8 14.5L21.1 23.9M21.1 14.8V23.9H12.3" stroke-linejoin="miter"/></svg><span class="pct"><span style="letter-spacing:0.8px">4</span>%</span></span></div>
<div class="abs cell" style="right:418.2px;top:1010.6px;"><span class="val"><span style="letter-spacing:0.8px">2</span><span style="letter-spacing:-0.8px">.</span><span style="letter-spacing:0.8px">4</span>%</span><span class="badge" style="background:#ffe4e6;color:#be123c"><svg width="36" height="39" viewBox="0 0 36 39" fill="none" stroke="#be123c" stroke-width="1.9"><path d="M11.8 14.5L21.1 23.9M21.1 14.8V23.9H12.3" stroke-linejoin="miter"/></svg><span class="pct"><span style="letter-spacing:-1.5px">1</span><span style="letter-spacing:0.8px">6</span>%</span></span></div>
<div class="abs cell" style="right:90.6px;top:1010.6px;"><span class="val"><span style="letter-spacing:0.8px">7</span>h<span style="letter-spacing:-0.3px"> </span><span style="letter-spacing:0.8px">3</span><span style="letter-spacing:0.8px">2</span>m</span><span class="badge" style="background:#d1fae5;color:#047857"><svg width="36" height="39" viewBox="0 0 36 39" fill="none" stroke="#047857" stroke-width="1.9"><path d="M11.8 14.5L21.1 23.9M21.1 14.8V23.9H12.3" stroke-linejoin="miter"/></svg><span class="pct"><span style="letter-spacing:0.8px">3</span><span style="letter-spacing:-1.5px">1</span>%</span></span></div>
<div class="t" style="left:67.75px;top:1107.75px;font-size:20.50px;line-height:20.50px;color:#111827;font-weight:400;letter-spacing:0.262px;-webkit-text-stroke:0.45px #111827;">Magnam sed quasi esse totam similique alias corrupti.</div>
<div class="abs cell" style="right:1345.0px;top:1101.6px;"><span class="val"><span style="letter-spacing:0.8px">3</span><span style="letter-spacing:-0.8px">.</span><span style="letter-spacing:0.8px">0</span>k</span><span class="badge" style="background:#ffe4e6;color:#be123c"><svg width="36" height="39" viewBox="0 0 36 39" fill="none" stroke="#be123c" stroke-width="1.9"><path d="M11.8 14.5L21.1 23.9M21.1 14.8V23.9H12.3" stroke-linejoin="miter"/></svg><span class="pct"><span style="letter-spacing:0.8px">2</span><span style="letter-spacing:0.8px">6</span>%</span></span></div>
<div class="abs cell" style="right:1129.0px;top:1101.6px;"><span class="val"><span style="letter-spacing:0.8px">3</span><span style="letter-spacing:-0.8px">.</span><span style="letter-spacing:0.8px">5</span>k</span><span class="badge" style="background:#ffe4e6;color:#be123c"><svg width="36" height="39" viewBox="0 0 36 39" fill="none" stroke="#be123c" stroke-width="1.9"><path d="M11.8 14.5L21.1 23.9M21.1 14.8V23.9H12.3" stroke-linejoin="miter"/></svg><span class="pct"><span style="letter-spacing:0.8px">2</span><span style="letter-spacing:0.8px">0</span>%</span></span></div>
<div class="abs cell" style="right:887.0px;top:1101.6px;"><span class="val"><span style="letter-spacing:0.8px">3</span><span style="letter-spacing:0.8px">7</span>s</span><span class="badge" style="background:#d1fae5;color:#047857"><svg width="36" height="39" viewBox="0 0 36 39" fill="none" stroke="#047857" stroke-width="1.9"><path d="M11.8 23.9L21.1 14.5M12.3 14.5H21.1V23.6" stroke-linejoin="miter"/></svg><span class="pct"><span style="letter-spacing:0.8px">2</span><span style="letter-spacing:0.8px">9</span>%</span></span></div>
<div class="abs cell" style="right:661.2px;top:1101.6px;"><span class="val"><span style="letter-spacing:0.8px">8</span><span style="letter-spacing:0.8px">5</span><span style="letter-spacing:-0.8px">.</span><span style="letter-spacing:0.8px">5</span>%</span><span class="badge" style="background:#d1fae5;color:#047857"><svg width="36" height="39" viewBox="0 0 36 39" fill="none" stroke="#047857" stroke-width="1.9"><path d="M11.8 14.5L21.1 23.9M21.1 14.8V23.9H12.3" stroke-linejoin="miter"/></svg><span class="pct"><span style="letter-spacing:0.8px">2</span>%</span></span></div>
<div class="abs cell" style="right:418.2px;top:1101.6px;"><span class="val"><span style="letter-spacing:0.8px">2</span><span style="letter-spacing:-0.8px">.</span><span style="letter-spacing:0.8px">8</span>%</span><span class="badge" style="background:#d1fae5;color:#047857"><svg width="36" height="39" viewBox="0 0 36 39" fill="none" stroke="#047857" stroke-width="1.9"><path d="M11.8 23.9L21.1 14.5M12.3 14.5H21.1V23.6" stroke-linejoin="miter"/></svg><span class="pct"><span style="letter-spacing:0.8px">3</span><span style="letter-spacing:-1.5px">1</span>%</span></span></div>
<div class="abs cell" style="right:90.6px;top:1101.6px;"><span class="val"><span style="letter-spacing:0.8px">4</span>h<span style="letter-spacing:-0.3px"> </span><span style="letter-spacing:-1.5px">1</span><span style="letter-spacing:0.8px">3</span>m</span><span class="badge" style="background:#ffe4e6;color:#be123c"><svg width="36" height="39" viewBox="0 0 36 39" fill="none" stroke="#be123c" stroke-width="1.9"><path d="M11.8 23.9L21.1 14.5M12.3 14.5H21.1V23.6" stroke-linejoin="miter"/></svg><span class="pct"><span style="letter-spacing:0.8px">3</span><span style="letter-spacing:0.8px">6</span>%</span></span></div>
<div class="t" style="left:67.75px;top:1198.75px;font-size:20.50px;line-height:20.50px;color:#111827;font-weight:400;letter-spacing:0.288px;-webkit-text-stroke:0.45px #111827;">Magni blanditiis ipsa corporis sed dolore sapiente alias id.</div>
<div class="abs cell" style="right:1345.0px;top:1192.6px;"><span class="val"><span style="letter-spacing:0.8px">4</span><span style="letter-spacing:-0.8px">.</span><span style="letter-spacing:0.8px">2</span>k</span><span class="badge" style="background:#d1fae5;color:#047857"><svg width="36" height="39" viewBox="0 0 36 39" fill="none" stroke="#047857" stroke-width="1.9"><path d="M11.8 23.9L21.1 14.5M12.3 14.5H21.1V23.6" stroke-linejoin="miter"/></svg><span class="pct"><span style="letter-spacing:-1.5px">1</span><span style="letter-spacing:0.8px">3</span>%</span></span></div>
<div class="abs cell" style="right:1129.0px;top:1192.6px;"><span class="val"><span style="letter-spacing:0.8px">4</span><span style="letter-spacing:-0.8px">.</span><span style="letter-spacing:0.8px">4</span>k</span><span class="badge" style="background:#d1fae5;color:#047857"><svg width="36" height="39" viewBox="0 0 36 39" fill="none" stroke="#047857" stroke-width="1.9"><path d="M11.8 23.9L21.1 14.5M12.3 14.5H21.1V23.6" stroke-linejoin="miter"/></svg><span class="pct"><span style="letter-spacing:-1.5px">1</span><span style="letter-spacing:0.8px">6</span>%</span></span></div>
<div class="abs cell" style="right:887.0px;top:1192.6px;"><span class="val"><span style="letter-spacing:-1.5px">1</span>m<span style="letter-spacing:-0.3px"> </span><span style="letter-spacing:-1.5px">1</span><span style="letter-spacing:0.8px">4</span>s</span><span class="badge" style="background:#ffe4e6;color:#be123c"><svg width="36" height="39" viewBox="0 0 36 39" fill="none" stroke="#be123c" stroke-width="1.9"><path d="M11.8 14.5L21.1 23.9M21.1 14.8V23.9H12.3" stroke-linejoin="miter"/></svg><span class="pct"><span style="letter-spacing:-1.5px">1</span>%</span></span></div>
<div class="abs cell" style="right:661.2px;top:1192.6px;"><span class="val"><span style="letter-spacing:0.8px">6</span><span style="letter-spacing:-0.8px">.</span><span style="letter-spacing:0.8px">4</span>%</span><span class="badge" style="background:#d1fae5;color:#047857"><svg width="36" height="39" viewBox="0 0 36 39" fill="none" stroke="#047857" stroke-width="1.9"><path d="M11.8 14.5L21.1 23.9M21.1 14.8V23.9H12.3" stroke-linejoin="miter"/></svg><span class="pct"><span style="letter-spacing:0.8px">2</span><span style="letter-spacing:0.8px">0</span>%</span></span></div>
<div class="abs cell" style="right:418.2px;top:1192.6px;"><span class="val"><span style="letter-spacing:-1.5px">1</span><span style="letter-spacing:0.8px">2</span><span style="letter-spacing:-0.8px">.</span><span style="letter-spacing:-1.5px">1</span>%</span><span class="badge" style="background:#d1fae5;color:#047857"><svg width="36" height="39" viewBox="0 0 36 39" fill="none" stroke="#047857" stroke-width="1.9"><path d="M11.8 23.9L21.1 14.5M12.3 14.5H21.1V23.6" stroke-linejoin="miter"/></svg><span class="pct"><span style="letter-spacing:0.8px">2</span>%</span></span></div>
<div class="abs cell" style="right:90.6px;top:1192.6px;"><span class="val"><span style="letter-spacing:0.8px">3</span>h<span style="letter-spacing:-0.3px"> </span><span style="letter-spacing:-1.5px">1</span><span style="letter-spacing:0.8px">6</span>m</span><span class="badge" style="background:#d1fae5;color:#047857"><svg width="36" height="39" viewBox="0 0 36 39" fill="none" stroke="#047857" stroke-width="1.9"><path d="M11.8 14.5L21.1 23.9M21.1 14.8V23.9H12.3" stroke-linejoin="miter"/></svg><span class="pct"><span style="letter-spacing:0.8px">3</span><span style="letter-spacing:0.8px">4</span>%</span></span></div>
<div class="t" style="left:66.50px;top:1295.07px;font-size:20.00px;line-height:20.00px;color:#374151;font-weight:400;letter-spacing:-0.056px;">Showing Page 1 of 2</div>
<div class="abs" style="left:2138px;top:1280px;width:195px;height:49px;border-radius:9px;background:#fff;box-shadow:inset 0 0 0 1.7px #d5d8dd,0 1px 2px rgba(0,0,0,0.05)"></div>
<svg class="abs" style="left:2138px;top:1280px" width="195" height="49" viewBox="0 0 195 49" fill="none" stroke="#9ca3af" stroke-width="2.1" stroke-linecap="round" stroke-linejoin="round">
<path d="M48.6 0V49M97.4 0V49M146 0V49" stroke="#d5d8dd" stroke-width="1.7" stroke-linecap="butt"/>
<path d="M23.5 17.8L17 24.2L23.5 30.6M32 17.8L25.5 24.2L32 30.6"/>
<path d="M76.5 17.8L70 24.2L76.5 30.6"/>
<path d="M118.5 17.8L125 24.2L118.5 30.6"/>
<path d="M163 17.8L169.5 24.2L163 30.6M171.5 17.8L178 24.2L171.5 30.6"/>
</svg>
</body></html>
